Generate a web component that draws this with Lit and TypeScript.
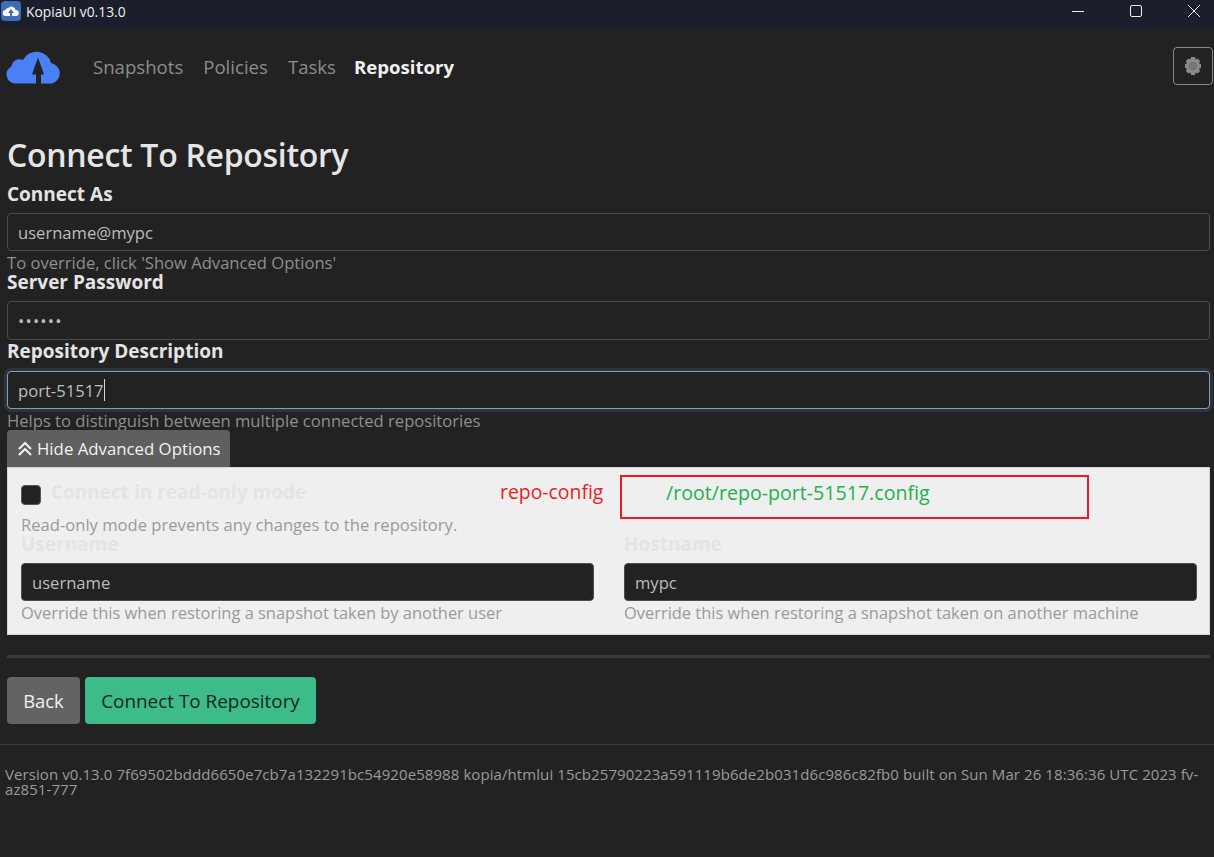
import { LitElement, html, css } from "lit";
import { customElement } from "lit/decorators.js";

@customElement("app-root")
export class AppRoot extends LitElement {
  static styles = css`
    :host { display: block; height: 857px; background: #222222; color: #dddddd; font-family: "Open Sans", "Noto Sans", sans-serif; font-size: 16px; overflow: hidden; }
    * { box-sizing: border-box; }
    .titlebar { height: 29px; background: #1b1f2b; display: flex; align-items: center; color: #f2f2f2; font-size: 13.8px; padding: 0 0 7px 1px; }
    .appicon { width: 20px; height: 20px; margin-right: 5px; display: block; }
    .winbtns { margin-left: auto; display: flex; align-items: center; gap: 18px; }
    .winbtns svg { display: block; width: 14px; height: 14px; }
    .winbtn { width: 40px; display: flex; justify-content: center; }
    .navbar { height: 76px; display: flex; align-items: center; padding: 0 1px 2px 6px; }
    .logo { width: 56px; height: 36px; margin-right: 31px; display: block; }
    .nav { display: flex; gap: 20px; font-size: 18.6px; color: #8c8c8c; }
    .nav b { color: #f0f0f0; font-weight: 700; margin-left: -2px; }
    .gear { margin-left: auto; width: 40px; height: 38px; border: 1px solid #888; border-radius: 4px; display: flex; align-items: center; justify-content: center; }
    .main { padding: 0 4px 0 7px; }
    h1 { margin: 26px 0 7px; height: 47px; line-height: 47px; font-size: 32px; font-weight: 600; color: #e6e6e6; letter-spacing: -0.3px; }
    .label { font-size: 19px; font-weight: 700; line-height: 18px; height: 28px; color: #e4e4e4; }
    .label.tall { height: 31px; line-height: 22px; }
    .input { height: 38px; background: #222; border: 1px solid #4c4c4c; border-radius: 4px; display: flex; align-items: center; padding: 0 10px; font-size: 16.6px; color: #bdbdbd; }
    .pw { height: 39px; letter-spacing: 1.2px; }
    .focus { border-color: #8d9bb0; box-shadow: 0 0 0 3px #2a3340; }
    .caret { width: 1px; height: 22px; background: #d8d8d8; }
    .help { font-size: 16.6px; line-height: 20px; padding-top: 2px; color: #8f8f8f; white-space: nowrap; }
    .toggle { position: relative; margin-top: -1px; width: 223px; height: 37px; background: #5f5f5f; border-radius: 4px 4px 0 0; display: flex; align-items: center; padding-left: 10px; gap: 4px; color: #f2f2f2; font-size: 16.8px; }
    .panel { position: relative; height: 168px; background: #efefef; border: 1px solid #d5d5d5; padding: 9px 13px 0 13px; }
    .check { display: flex; align-items: flex-start; height: 36px; gap: 10px; }
    .box { width: 20px; height: 20px; background: #222; border-radius: 4px; border: 1px solid #555; margin-top: 8px; }
    .faint { font-weight: 700; font-size: 19px; color: #e4e4e4; line-height: 30px; }
    .panel .help { color: #9a9a9a; }
    .cols { display: grid; grid-template-columns: 573px 573px; gap: 30px; }
    .cols .faint { line-height: 18px; height: 28px; }
    .cols .help { font-size: 16.45px; }
    .cols .field { height: 38px; background: #222; border: 1px solid #4c4c4c; border-radius: 4px; display: flex; align-items: center; padding: 0 10px; color: #bdbdbd; font-size: 16.6px; }
    .anno { position: absolute; left: 492px; top: 11px; color: #ed1c24; font-size: 19.4px; line-height: 26px; }
    .redbox { position: absolute; left: 612px; top: 7px; width: 469px; height: 44px; border: 2px solid #ed1c24; color: #22b14c; font-size: 19.6px; padding-left: 44px; display: flex; align-items: flex-start; line-height: 31px; }
    .rule { height: 3px; background: #3a3a3a; margin: 20px 0 19px; }
    .btns { display: flex; gap: 5px; }
    .btn { height: 47px; border-radius: 4px; display: flex; align-items: center; justify-content: center; font-size: 18.9px; }
    .back { width: 73px; background: #636363; color: #f2f2f2; font-size: 18.4px; }
    .go { width: 231px; background: #3dbb88; color: #13291f; }
    .foot { margin-top: 20px; border-top: 1px solid #3a3a3a; padding: 22px 4px 0 5px; font-size: 15px; line-height: 15px; color: #9a9a9a; letter-spacing: 0.08px; }
  `;

  render() {
    return html`
      <div class="titlebar">
        <svg class="appicon" viewBox="0 0 20 20"><rect width="20" height="20" rx="4" fill="#3d6db5"/><path d="M5 15a3 3 0 0 1 -.5 -6a3 3 0 0 1 3 -2a4 4 0 0 1 7 2a3 3 0 0 1 .5 6h-4v-3h2l-3 -4 -3 4h2v3z" fill="#fff"/></svg>
        <span>KopiaUI v0.13.0</span>
        <div class="winbtns">
          <div class="winbtn"><svg viewBox="0 0 14 14"><path d="M1 7.500h12" stroke="#eee" fill="none"/></svg></div>
          <div class="winbtn"><svg viewBox="0 0 14 14"><rect x="1.500" y="1.500" width="11" height="11" rx="1.500" stroke="#eee" fill="none"/></svg></div>
          <div class="winbtn"><svg viewBox="0 0 14 14"><path d="M1 1l12 12M13 1L1 13" stroke="#eee" fill="none"/></svg></div>
        </div>
      </div>
      <div class="navbar">
        <svg class="logo" viewBox="0.500 -0.500 55 36"><path d="M9 35a9 9 0 0 1 -3.500 -17a8 8 0 0 1 11.500 -6.500a15 15 0 0 1 28 3a10.500 10.500 0 0 1 1 20.500H35V26h3L32 9 26 26h4v9z" fill="#4a80f5"/></svg>
        <div class="nav"><span>Snapshots</span><span>Policies</span><span>Tasks</span><b>Repository</b></div>
        <div class="gear">
          <svg width="18" height="18" viewBox="0 0 18 18"><path fill-rule="evenodd" fill="#8a8a8a" d="M7 0h4l.6 2.400 2.200-1 2.400 2.800-1.300 2 2.100 1.100v3.400l-2.100 1.100 1.300 2-2.400 2.800-2.200-1L11 18H7l-.6-2.400-2.200 1-2.400-2.800 1.300-2L1 10.700V7.300l2.100-1.100-1.300-2 2.400-2.800 2.200 1zM9 5.500a3.500 3.500 0 1 0 0 7 3.500 3.500 0 0 0 0-7z"/><circle cx="9" cy="9" r="3.500" fill="#777"/></svg>
        </div>
      </div>
      <div class="main">
        <h1>Connect To Repository</h1>
        <div class="label">Connect As</div>
        <div class="input">username@mypc</div>
        <div class="help">To override, click 'Show Advanced Options'</div>
        <div class="label">Server Password</div>
        <div class="input pw">••••••</div>
        <div class="label tall">Repository Description</div>
        <div class="input focus">port-51517<span class="caret"></span></div>
        <div class="help">Helps to distinguish between multiple connected repositories</div>
        <div class="toggle">
          <svg width="16" height="16" viewBox="0 0 16 16" fill="none" stroke="#f2f2f2" stroke-width="2"><path d="M2 8l6-6 6 6M2 14l6-6 6 6"/></svg>
          <span>Hide Advanced Options</span>
        </div>
        <div class="panel">
          <div class="check"><span class="box"></span><span class="faint">Connect in read-only mode</span></div>
          <div class="help">Read-only mode prevents any changes to the repository.</div>
          <div class="cols">
            <div>
              <div class="faint">Username</div>
              <div class="field">username</div>
              <div class="help">Override this when restoring a snapshot taken by another user</div>
            </div>
            <div>
              <div class="faint">Hostname</div>
              <div class="field">mypc</div>
              <div class="help">Override this when restoring a snapshot taken on another machine</div>
            </div>
          </div>
          <div class="anno">repo-config</div>
          <div class="redbox">/root/repo-port-51517.config</div>
        </div>
        <div class="rule"></div>
        <div class="btns"><div class="btn back">Back</div><div class="btn go">Connect To Repository</div></div>
      </div>
      <div class="foot">Version v0.13.0 7f69502bddd6650e7cb7a132291bc54920e58988 kopia/htmlui 15cb25790223a591119b6de2b031d6c986c82fb0 built on Sun Mar 26 18:36:36 UTC 2023 fv-az851-777</div>
    `;
  }
}
